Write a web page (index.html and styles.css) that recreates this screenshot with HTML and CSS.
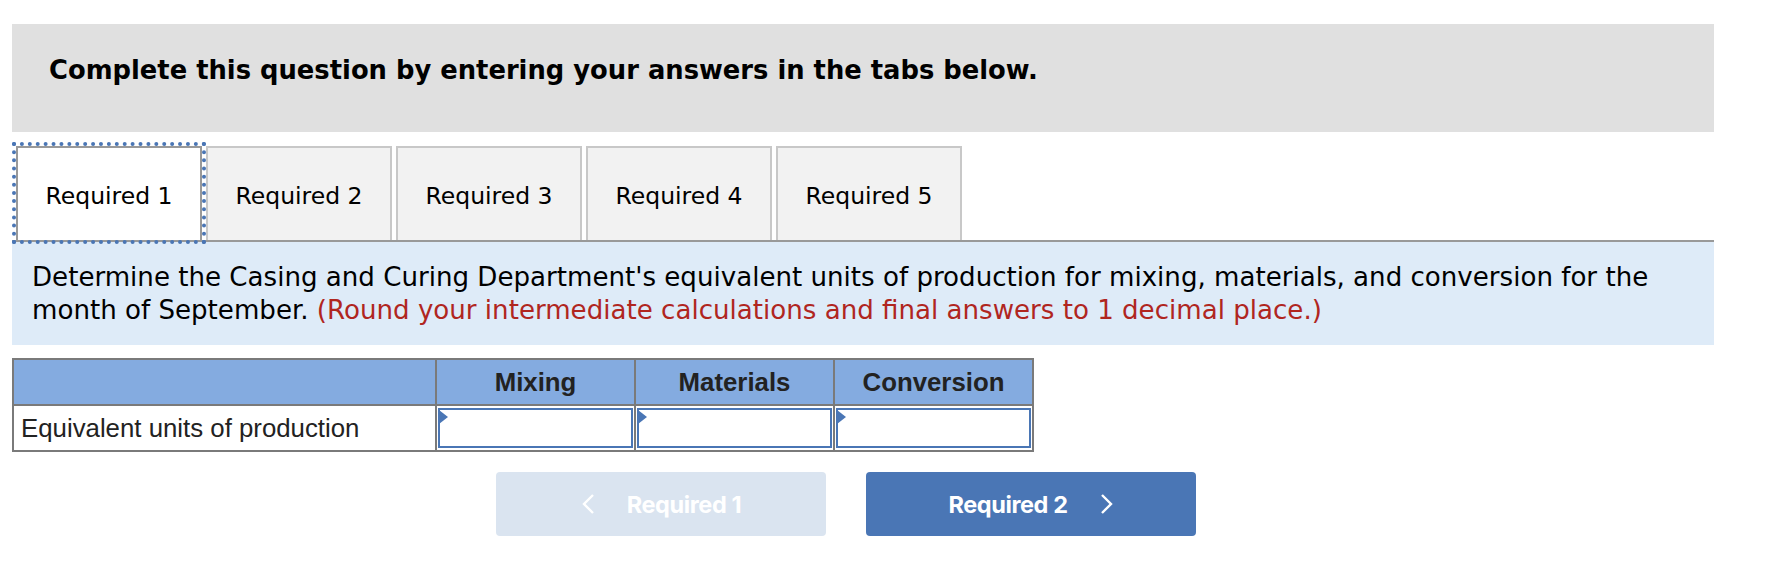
FILE: index.html
```html
<!DOCTYPE html>
<html lang="en">
<head>
  <meta charset="UTF-8">
  <meta name="viewport" content="width=device-width, initial-scale=1.0">
  <title>Required 1</title>
  <link rel="stylesheet" href="styles.css">
</head>
<body>

  <div class="question">

    <!-- Encabezado -->
    <div class="intro">
      <p>Complete this question by entering your answers in the tabs below.</p>
    </div>

    <!-- Pestañas -->
    <div class="tabs">
      <div class="tab active">Required 1</div>
      <div class="tab">Required 2</div>
      <div class="tab">Required 3</div>
      <div class="tab">Required 4</div>
      <div class="tab">Required 5</div>
    </div>

    <div class="instructions">
      Determine the Casing and Curing Department's equivalent units of production for mixing, materials, and conversion for the month of September. <span class="hint">(Round your intermediate calculations and final answers to 1 decimal place.)</span>
    </div>

    <!-- Tabla de respuestas -->
    <table class="answers">
      <tr>
        <th class="label-col"></th>
        <th>Mixing</th>
        <th>Materials</th>
        <th>Conversion</th>
      </tr>
      <tr>
        <td class="label">Equivalent units of production</td>
        <td class="cell"><div class="input"></div></td>
        <td class="cell"><div class="input"></div></td>
        <td class="cell"><div class="input"></div></td>
      </tr>
    </table>

    <!-- Navegación -->
    <div class="nav">
      <button class="nav-btn prev">
        <svg width="14" height="22" viewBox="0 0 14 22"><polyline points="12,2 3,11 12,20" fill="none" stroke="#fff" stroke-width="2.4"/></svg>
        <span>Required 1</span>
      </button>
      <button class="nav-btn next">
        <span>Required 2</span>
        <svg width="14" height="22" viewBox="0 0 14 22"><polyline points="2,2 11,11 2,20" fill="none" stroke="#fff" stroke-width="2.4"/></svg>
      </button>
    </div>

  </div>

</body>
</html>
```

FILE: styles.css
```css
body {
  margin: 0;
  padding: 24px 0 0 12px;
  background-color: #fff;
  font-family: "DejaVu Sans", Verdana, sans-serif;
  color: #000;
}
.question {
  width: 1702px;
}

/* Encabezado */
.intro {
  background-color: #e0e0e0;
  height: 108px;
  box-sizing: border-box;
  padding: 31px 0 0 37px;
}
.intro p {
  margin: 0;
  font-size: 25.8px;
  font-weight: bold;
}

/* Pestañas */
.tabs {
  display: flex;
  gap: 4px;
  margin-top: 14px;
  padding-left: 4px;
  border-bottom: 2px solid #999;
}
.tab {
  width: 186px;
  height: 94px;
  box-sizing: border-box;
  display: flex;
  align-items: center;
  justify-content: center;
  background-color: #f2f2f2;
  border: 2px solid #c8c8c8;
  border-bottom: none;
  font-size: 23.5px;
  padding-top: 4px;
}
.tab.active {
  background-color: #fff;
  border-color: #999;
  outline: 4px dotted #4a76b5;
}

.instructions {
  background-color: #deebf8;
  padding: 19px 20px 18px 20px;
  font-size: 26.1px;
  line-height: 33px;
}
.instructions .hint {
  color: #b0261f;
}

/* Tabla */
.answers {
  border-collapse: collapse;
  margin-top: 13px;
  font-family: "Liberation Sans", Arial, sans-serif;
  font-size: 25.8px;
  color: #222;
}
.answers th,
.answers td {
  border: 2px solid #7a7a7a;
  padding: 0;
}
.answers th {
  background-color: #84abe0;
  height: 44px;
  font-weight: bold;
  width: 197px;
}
.answers th.label-col {
  width: 421px;
}
.answers td {
  height: 42px;
}
.answers td.label {
  padding-left: 7px;
  text-align: left;
}
.answers td.cell {
  padding: 1px;
}
.input {
  position: relative;
  height: 40px;
  box-sizing: border-box;
  border: 2px solid #4a76b5;
  background-color: #fff;
}
.input::before {
  content: "";
  position: absolute;
  left: -1px;
  top: 0;
  border-left: 9px solid #4a76b5;
  border-top: 7px solid transparent;
  border-bottom: 7px solid transparent;
}

/* Botones de navegación */
.nav {
  display: flex;
  gap: 40px;
  margin-top: 20px;
  padding-left: 484px;
}
.nav-btn {
  width: 330px;
  height: 64px;
  border: none;
  border-radius: 4px;
  display: flex;
  align-items: center;
  justify-content: center;
  gap: 32px;
  color: #fff;
  font-family: Inter, "Liberation Sans", sans-serif;
  font-size: 23.5px;
  font-weight: bold;
  letter-spacing: -0.4px;
}
.nav-btn.prev {
  background-color: #dae4f0;
}
.nav-btn.next {
  background-color: #4a76b5;
}
```
